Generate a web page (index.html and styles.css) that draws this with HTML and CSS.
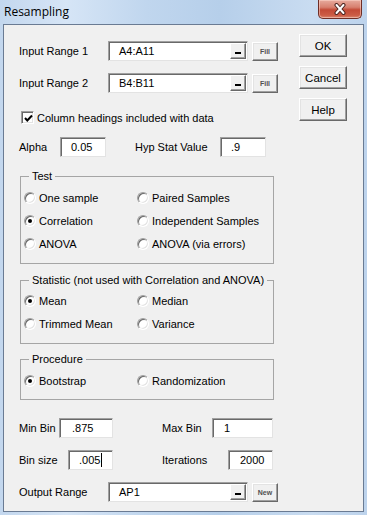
FILE: index.html
```html
<!DOCTYPE html>
<html>
<head>
<meta charset="utf-8">
<title>Resampling</title>
<link rel="stylesheet" href="styles.css">
</head>
<body>
<div class="window">
  <div class="titlebar">
    <span class="title">Resampling</span>
    <div class="close">
      <svg width="14" height="12" viewBox="0 0 14 12">
        <path d="M3.5 2 L10.5 10 M10.5 2 L3.5 10" stroke="#4a2420" stroke-width="4" stroke-linecap="round"/>
        <path d="M3.5 2 L10.5 10 M10.5 2 L3.5 10" stroke="#ffffff" stroke-width="2" stroke-linecap="round"/>
      </svg>
    </div>
  </div>
  <div class="client">
    <div class="main">
      <div class="row">
        <span class="lbl l-range">Input Range 1</span>
        <div class="refedit"><span class="val">A4:A11</span><span class="pick"><span class="bar"></span></span></div>
        <span class="btn tiny">Fill</span>
      </div>
      <div class="row r-gap12">
        <span class="lbl l-range">Input Range 2</span>
        <div class="refedit"><span class="val">B4:B11</span><span class="pick"><span class="bar"></span></span></div>
        <span class="btn tiny">Fill</span>
      </div>
      <div class="row check-row">
        <span class="check">
          <svg width="9" height="9" viewBox="0 0 9 9"><path d="M1 4 L3.3 6.5 L8 1.5" fill="none" stroke="#000" stroke-width="2"/></svg>
        </span>
        <span class="lbl">Column headings included with data</span>
      </div>
      <div class="row alpha-row">
        <span class="lbl l-alpha">Alpha</span>
        <span class="tb w46">0.05</span>
        <span class="lbl l-hyp">Hyp Stat Value</span>
        <span class="tb w46">.9</span>
      </div>

      <fieldset class="group g-test">
        <legend>Test</legend>
        <div class="opts">
          <span class="opt"><span class="radio"></span>One sample</span>
          <span class="opt"><span class="radio"></span>Paired Samples</span>
          <span class="opt"><span class="radio on"></span>Correlation</span>
          <span class="opt"><span class="radio"></span>Independent Samples</span>
          <span class="opt"><span class="radio"></span>ANOVA</span>
          <span class="opt"><span class="radio"></span>ANOVA (via errors)</span>
        </div>
      </fieldset>

      <fieldset class="group g-stat">
        <legend>Statistic (not used with Correlation and ANOVA)</legend>
        <div class="opts">
          <span class="opt"><span class="radio on"></span>Mean</span>
          <span class="opt"><span class="radio"></span>Median</span>
          <span class="opt"><span class="radio"></span>Trimmed Mean</span>
          <span class="opt"><span class="radio"></span>Variance</span>
        </div>
      </fieldset>

      <fieldset class="group g-proc">
        <legend>Procedure</legend>
        <div class="opts">
          <span class="opt"><span class="radio on"></span>Bootstrap</span>
          <span class="opt"><span class="radio"></span>Randomization</span>
        </div>
      </fieldset>

      <div class="row min-row">
        <span class="lbl l-min">Min Bin</span>
        <span class="tb w54 pad13">.875</span>
        <span class="lbl l-max">Max Bin</span>
        <span class="tb w61 pad11">1</span>
      </div>
      <div class="row r-gap12">
        <span class="lbl l-bin">Bin size</span>
        <span class="tb w45">.005<span class="caret"></span></span>
        <span class="lbl l-iter">Iterations</span>
        <span class="tb w45 pad11">2000</span>
      </div>
      <div class="row r-gap12">
        <span class="lbl l-range">Output Range</span>
        <div class="refedit"><span class="val">AP1</span><span class="pick"><span class="bar"></span></span></div>
        <span class="btn tiny">New</span>
      </div>
    </div>
    <div class="side">
      <span class="btn cmd">OK</span>
      <span class="btn cmd">Cancel</span>
      <span class="btn cmd">Help</span>
    </div>
  </div>
</div>
</body>
</html>
```
FILE: styles.css
```css
* { box-sizing: border-box; }
html, body { margin: 0; padding: 0; }
body {
  width: 367px;
  height: 515px;
  overflow: hidden;
  font-family: "Liberation Sans", Arial, sans-serif;
  font-size: 11px;
  color: #000;
}
.window {
  width: 367px;
  height: 515px;
  display: flex;
  flex-direction: column;
  background: linear-gradient(to right, #c3d7ee 0%, #d6e5f6 18%, #c0d6ee 40%, #b6cfea 60%, #c9dcf1 85%, #bdd3ec 100%);
}
.titlebar {
  height: 24px;
  flex: none;
  display: flex;
  justify-content: space-between;
  align-items: flex-start;
}
.title {
  font-family: "Open Sans", "Noto Sans", sans-serif;
  font-size: 12px;
  line-height: 16px;
  padding: 4px 0 0 4px;
  color: #000;
}
.close {
  width: 44px;
  height: 19px;
  margin-right: 5px;
  border: 1px solid #6e2e26;
  border-top: none;
  border-radius: 0 0 5px 5px;
  background: linear-gradient(#e7ab9e 0%, #d7806f 40%, #c34a36 55%, #cc5c45 85%, #d98870 100%);
  box-shadow: inset 0 0 0 1px rgba(255, 220, 210, 0.5);
  display: flex;
  align-items: center;
  justify-content: center;
}
.close svg { display: block; }

.client {
  margin: 0 3px;
  height: 488px;
  border: 1px solid #6a7b93;
  background: #f0f0f0;
  display: flex;
}
.main {
  width: 295px;
  flex: none;
  padding: 16px 0 0 15px;
  display: flex;
  flex-direction: column;
}
.side {
  padding-top: 9px;
  display: flex;
  flex-direction: column;
  gap: 9px;
}

.row {
  display: flex;
  align-items: center;
  height: 20px;
  flex: none;
}
.r-gap12 { margin-top: 12px; }
.check-row { margin-top: 18px; height: 13px; padding-left: 2px; }
.alpha-row { margin-top: 13px; }
.min-row { margin-top: 18px; }

.lbl { flex: none; white-space: nowrap; line-height: 14px; }
.l-range { width: 89px; }
.l-alpha { width: 41px; }
.l-hyp { width: 85px; margin-left: 29px; }
.l-min { width: 40px; }
.l-max { width: 50px; margin-left: 49px; }
.l-bin { width: 49px; }
.l-iter { width: 66px; margin-left: 49px; }

.tb, .refedit {
  height: 20px;
  background: #fff;
  border: 1px solid;
  border-color: #a0a0a0 #e3e3e3 #e3e3e3 #a0a0a0;
  box-shadow: inset 1px 1px 0 #696969;
  flex: none;
}
.tb {
  padding-left: 10px;
  line-height: 18px;
  display: flex;
  align-items: center;
}
.w45 { width: 45px; }
.w46 { width: 46px; }
.w54 { width: 54px; }
.w61 { width: 61px; }
.pad11 { padding-left: 11px; }
.pad13 { padding-left: 12px; }
.caret {
  display: inline-block;
  width: 1px;
  height: 14px;
  background: #000;
  margin-left: 1px;
}

.refedit {
  width: 140px;
  display: flex;
  align-items: center;
  justify-content: space-between;
  padding: 0 1px 0 10px;
}
.val { line-height: 14px; }
.pick {
  width: 16px;
  height: 16px;
  background: #f0f0f0;
  border: 1px solid;
  border-color: #ffffff #696969 #696969 #ffffff;
  box-shadow: inset -1px -1px 0 #a0a0a0;
  display: flex;
  align-items: flex-end;
  justify-content: center;
  padding-bottom: 4px;
}
.bar {
  width: 6px;
  height: 2px;
  background: #000;
}

.btn {
  display: flex;
  align-items: center;
  justify-content: center;
  background: #f0f0f0;
  border: 1px solid;
  border-color: #ffffff #696969 #696969 #ffffff;
  box-shadow: inset -1px -1px 0 #a0a0a0, inset 1px 1px 0 #e3e3e3;
  flex: none;
  white-space: nowrap;
}
.tiny {
  width: 26px;
  height: 19px;
  margin-left: 4px;
  font-size: 7px;
  font-weight: bold;
  color: #505050;
}
.cmd {
  width: 48px;
  height: 23px;
  font-size: 11.5px;
}

.check {
  width: 13px;
  height: 13px;
  flex: none;
  margin-right: 3px;
  background: #fff;
  border: 1px solid;
  border-color: #a0a0a0 #fff #fff #a0a0a0;
  box-shadow: inset 1px 1px 0 #696969, inset -1px -1px 0 #e3e3e3;
  display: flex;
  align-items: center;
  justify-content: center;
  padding: 1px 0 0 1px;
}
.check svg { display: block; }

.group {
  margin: 12px 0 0 1px;
  width: 254px;
  min-width: 0;
  border: 1px solid #a5a5a5;
  padding: 7px 0 11px 3px;
}
.group legend {
  margin-left: 5px;
  padding: 0 3px;
  line-height: 14px;
  font-size: 11px;
}
.g-stat { margin-top: 9px; padding-top: 6px; }
.g-proc { margin-top: 8px; padding-bottom: 10px; }

.opts {
  display: grid;
  grid-template-columns: 113px 1fr;
  grid-auto-rows: 16px;
  row-gap: 7px;
}
.opt {
  display: flex;
  align-items: center;
  white-space: nowrap;
}
.radio {
  width: 12px;
  height: 12px;
  flex: none;
  margin-right: 3px;
  border-radius: 50%;
  background: #fff;
  border: 1px solid;
  border-color: #a0a0a0 #ffffff #ffffff #a0a0a0;
  box-shadow: inset 1px 1px 0 #696969, inset -1px -1px 0 #e3e3e3;
  display: flex;
  align-items: center;
  justify-content: center;
}
.radio.on::after {
  content: "";
  width: 4px;
  height: 4px;
  border-radius: 50%;
  background: #000;
}
```
